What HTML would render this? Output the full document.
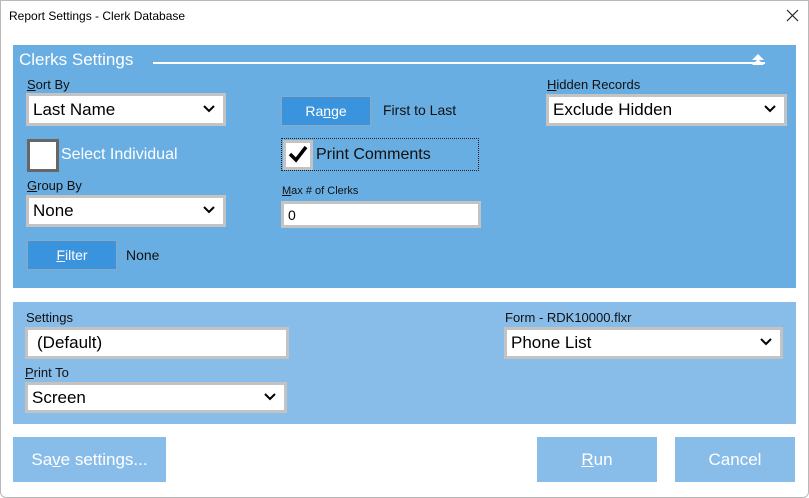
<!DOCTYPE html>
<html><head><style>
*{margin:0;padding:0;box-sizing:border-box}
body{width:809px;height:498px;background:#fff;font-family:"Liberation Sans",sans-serif;position:relative;overflow:hidden}
.a{position:absolute;white-space:nowrap}
.lbl{font-size:13px;color:#111}
.sel{position:absolute;background:#fff;border:3px solid #c3c3c3;font-size:17px;color:#000;padding-left:4px;display:flex;align-items:center}
.chev{position:absolute;right:8px;top:50%;margin-top:-5px}
.btn{position:absolute;background:#3a93dd;border:1px solid #8fa8c0;color:#fff;font-size:14px;display:flex;align-items:center;justify-content:center}
.bb{position:absolute;background:#88bde9;color:#fff;font-size:17px;display:flex;align-items:center;justify-content:center}
u{text-decoration:underline}
</style></head><body>
<div class="a" style="left:0;top:0;width:809px;height:498px;border:1px solid #b9b9b9;border-radius:0 0 6px 6px"></div>
<div class="a" style="left:9px;top:9px;font-size:12px;color:#000">Report Settings - Clerk Database</div>
<svg class="a" style="left:786px;top:9px" width="13" height="13"><path d="M1 1L12 12M12 1L1 12" stroke="#222" stroke-width="1.2"/></svg>

<div class="a" style="left:13px;top:45px;width:783px;height:243px;background:#68aee3"></div>
<div class="a" style="left:19px;top:50px;font-size:17px;color:#fff">Clerks Settings</div>
<div class="a" style="left:153px;top:62px;width:612px;height:2px;background:#fff"></div>
<svg class="a" style="left:751px;top:53px" width="14" height="14"><path d="M7 1L13 7H1Z M7 6L13 12H1Z" fill="#fff"/></svg>

<div class="a lbl" style="left:27px;top:77px"><u>S</u>ort By</div>
<div class="sel" style="left:26px;top:93px;width:200px;height:33px">Last Name<svg class="chev" width="12" height="8"><path d="M1 1L6 6L11 1" stroke="#000" stroke-width="2" fill="none"/></svg></div>

<div class="btn" style="left:281px;top:96px;width:90px;height:30px">Ra<u>n</u>ge</div>
<div class="a" style="left:383px;top:102px;font-size:14px;color:#111">First to Last</div>

<div class="a lbl" style="left:547px;top:77px"><u>H</u>idden Records</div>
<div class="sel" style="left:546px;top:94px;width:241px;height:32px">Exclude Hidden<svg class="chev" width="12" height="8"><path d="M1 1L6 6L11 1" stroke="#000" stroke-width="2" fill="none"/></svg></div>

<div class="a" style="left:27px;top:139px;width:32px;height:33px;background:#fff;border:3px solid #666"></div>
<div class="a" style="left:61px;top:146px;font-size:16px;color:#fff">Select Individual</div>

<div class="a" style="left:281px;top:138px;width:198px;height:33px;border:1px dotted #222"></div>
<div class="a" style="left:283px;top:140px;width:30px;height:30px;background:#fff;border:3px solid #c3c3c3"></div>
<svg class="a" style="left:287px;top:144px" width="22" height="20"><path d="M3 10L9 16L19 3" stroke="#000" stroke-width="3.5" fill="none"/></svg>
<div class="a" style="left:316px;top:146px;font-size:16px;color:#111">Print Comments</div>

<div class="a lbl" style="left:27px;top:178px"><u>G</u>roup By</div>
<div class="sel" style="left:26px;top:195px;width:200px;height:32px">None<svg class="chev" width="12" height="8"><path d="M1 1L6 6L11 1" stroke="#000" stroke-width="2" fill="none"/></svg></div>

<div class="a" style="left:282px;top:185px;font-size:11px;color:#111"><u>M</u>ax # of Clerks</div>
<div class="sel" style="left:281px;top:201px;width:200px;height:27px;font-size:14px">0</div>

<div class="btn" style="left:27px;top:240px;width:90px;height:30px"><u>F</u>ilter</div>
<div class="a" style="left:126px;top:247px;font-size:14px;color:#111">None</div>

<div class="a" style="left:13px;top:302px;width:783px;height:122px;background:#88bde9"></div>
<div class="a lbl" style="left:26px;top:310px">Settings</div>
<div class="sel" style="left:25px;top:327px;width:264px;height:32px;padding-left:9px">(Default)</div>
<div class="a lbl" style="left:25px;top:365px"><u>P</u>rint To</div>
<div class="sel" style="left:25px;top:382px;width:262px;height:31px">Screen<svg class="chev" width="12" height="8"><path d="M1 1L6 6L11 1" stroke="#000" stroke-width="2" fill="none"/></svg></div>
<div class="a lbl" style="left:505px;top:310px">Form - RDK10000.flxr</div>
<div class="sel" style="left:504px;top:327px;width:279px;height:32px">Phone List<svg class="chev" width="12" height="8"><path d="M1 1L6 6L11 1" stroke="#000" stroke-width="2" fill="none"/></svg></div>

<div class="bb" style="left:13px;top:437px;width:153px;height:45px">Sa<u>v</u>e settings...</div>
<div class="bb" style="left:537px;top:437px;width:120px;height:45px"><u>R</u>un</div>
<div class="bb" style="left:675px;top:437px;width:120px;height:45px">Cancel</div>
</body></html>
